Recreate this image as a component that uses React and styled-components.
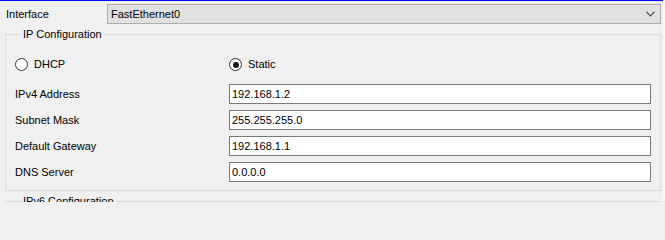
import React from 'react';
import styled, { createGlobalStyle } from 'styled-components';

const GlobalStyle = createGlobalStyle`
  html, body {
    margin: 0;
    padding: 0;
    overflow: hidden;
    background: #f0f0f0;
  }
  body {
    font-family: "Liberation Sans", Arial, sans-serif;
    font-size: 11px;
    color: #000;
  }
`;

const Page = styled.div`
  display: flex;
  width: 665px;
  height: 202px;
  overflow: hidden;
`;

const Panel = styled.div`
  width: 663px;
  border-top: 1px solid #0000ff;
  box-sizing: border-box;
`;

const Edge = styled.div`
  width: 2px;
  background: #f6f6f6;
`;

const HeaderRow = styled.div`
  display: flex;
  align-items: center;
  height: 20px;
  margin-top: 3px;
  padding-left: 6px;
`;

const HeaderLabel = styled.span`
  width: 101px;
  line-height: 13px;
`;

const Select = styled.div`
  display: flex;
  align-items: center;
  justify-content: space-between;
  box-sizing: border-box;
  width: 554px;
  height: 20px;
  padding: 0 5px 0 3px;
  background: #e1e1e1;
  border: 1px solid #adadad;
`;

const Group = styled.fieldset`
  margin: ${p => p.$top}px 2px 0 5px;
  padding: 0 9px 8px 9px;
  border: 1px solid #dcdcdc;
  min-width: 0;
`;

const Legend = styled.legend`
  margin-left: 6px;
  padding: 0 2px;
  line-height: 13px;
`;

const RadioRow = styled.div`
  display: grid;
  grid-template-columns: 214px 1fr;
  height: 13px;
  margin: 17px 0 13px;
`;

const RadioOption = styled.label`
  display: flex;
  align-items: center;
  gap: 6px;
  line-height: 13px;
`;

const RadioCircle = styled.span`
  position: relative;
  box-sizing: border-box;
  width: 13px;
  height: 13px;
  border-radius: 50%;
  border: 1px solid #333;
  background: #fff;

  &::after {
    content: "";
    display: ${p => (p.$checked ? 'block' : 'none')};
    position: absolute;
    left: 2.5px;
    top: 2.5px;
    width: 6px;
    height: 6px;
    border-radius: 50%;
    background: #1a1a1a;
  }
`;

const Fields = styled.div`
  display: grid;
  grid-template-columns: 214px 422px;
  row-gap: 6px;
  align-items: center;
`;

const FieldLabel = styled.span`
  line-height: 13px;
`;

const Input = styled.div`
  box-sizing: border-box;
  height: 20px;
  padding-left: 2px;
  display: flex;
  align-items: center;
  background: #fff;
  border: 1px solid #7a7a7a;
`;

const fields = [
  { label: 'IPv4 Address', value: '192.168.1.2' },
  { label: 'Subnet Mask', value: '255.255.255.0' },
  { label: 'Default Gateway', value: '192.168.1.1' },
  { label: 'DNS Server', value: '0.0.0.0' },
];

function Chevron() {
  return (
    <svg width="9" height="6" viewBox="0 0 9 6">
      <path d="M0.5 0.8 L4.5 4.8 L8.5 0.8" fill="none" stroke="#4a4a4a" strokeWidth="1.2" />
    </svg>
  );
}

export default function App() {
  return (
    <Page>
      <GlobalStyle />
      <Panel>
        <HeaderRow>
          <HeaderLabel>Interface</HeaderLabel>
          <Select>
            <span>FastEthernet0</span>
            <Chevron />
          </Select>
        </HeaderRow>

        <Group $top={4}>
          <Legend>IP Configuration</Legend>
          <RadioRow>
            <RadioOption>
              <RadioCircle />
              DHCP
            </RadioOption>
            <RadioOption>
              <RadioCircle $checked />
              Static
            </RadioOption>
          </RadioRow>
          <Fields>
            {fields.map(({ label, value }) => (
              <React.Fragment key={label}>
                <FieldLabel>{label}</FieldLabel>
                <Input>{value}</Input>
              </React.Fragment>
            ))}
          </Fields>
        </Group>

        <Group $top={4}>
          <Legend>IPv6 Configuration</Legend>
          <RadioRow />
        </Group>
      </Panel>
      <Edge />
    </Page>
  );
}
